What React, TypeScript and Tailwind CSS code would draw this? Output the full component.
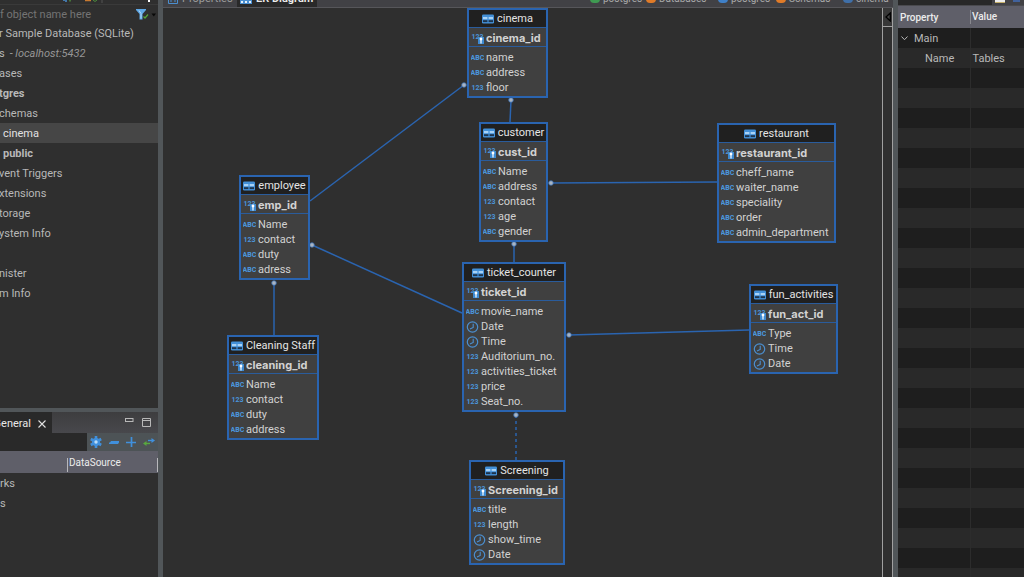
import React from "react";

type Kind = "abc" | "num" | "time";

interface Entity {
  name: string;
  place: string;
  pk: string;
  columns: [Kind, string][];
}

const entities: Entity[] = [
  { name: "cinema", place: "left-[304px] top-[0px] w-[81px]", pk: "cinema_id", columns: [["abc", "name"], ["abc", "address"], ["num", "floor"]] },
  { name: "customer", place: "left-[316px] top-[114px] w-[69px]", pk: "cust_id", columns: [["abc", "Name"], ["abc", "address"], ["num", "contact"], ["num", "age"], ["abc", "gender"]] },
  { name: "restaurant", place: "left-[554px] top-[115px] w-[119px]", pk: "restaurant_id", columns: [["abc", "cheff_name"], ["abc", "waiter_name"], ["abc", "speciality"], ["abc", "order"], ["abc", "admin_department"]] },
  { name: "employee", place: "left-[76px] top-[167px] w-[71px]", pk: "emp_id", columns: [["abc", "Name"], ["num", "contact"], ["abc", "duty"], ["abc", "adress"]] },
  { name: "ticket_counter", place: "left-[299px] top-[254px] w-[104px]", pk: "ticket_id", columns: [["abc", "movie_name"], ["time", "Date"], ["time", "Time"], ["num", "Auditorium_no."], ["num", "activities_ticket"], ["num", "price"], ["num", "Seat_no."]] },
  { name: "fun_activities", place: "left-[586px] top-[276px] w-[89px]", pk: "fun_act_id", columns: [["abc", "Type"], ["time", "Time"], ["time", "Date"]] },
  { name: "Cleaning Staff", place: "left-[64px] top-[327px] w-[92px]", pk: "cleaning_id", columns: [["abc", "Name"], ["num", "contact"], ["abc", "duty"], ["abc", "address"]] },
  { name: "Screening", place: "left-[306px] top-[452px] w-[96px]", pk: "Screening_id", columns: [["abc", "title"], ["num", "length"], ["time", "show_time"], ["time", "Date"]] },
];

const links: { from: [number, number]; to: [number, number]; dashed?: boolean }[] = [
  { from: [301, 77], to: [147, 193] },
  { from: [348, 92], to: [347, 114] },
  { from: [388, 175], to: [554, 174] },
  { from: [351, 236], to: [351, 254] },
  { from: [149, 237], to: [299, 305] },
  { from: [406, 327], to: [586, 322] },
  { from: [111, 275], to: [111, 327] },
  { from: [353, 407], to: [353, 452], dashed: true },
];

const tree: { label: string; className?: string; note?: string }[] = [
  { label: "r Sample Database (SQLite)" },
  { label: "s", note: "- localhost:5432" },
  { label: "ases" },
  { label: "tgres", className: "font-bold" },
  { label: "chemas" },
  { label: "cinema", className: "bg-[#464646] pl-1 text-[#e2e2e2]" },
  { label: "public", className: "pl-1 font-bold" },
  { label: "vent Triggers" },
  { label: "xtensions" },
  { label: "torage" },
  { label: "ystem Info" },
  { label: "" },
  { label: "nister" },
  { label: "m Info" },
];

function TableIcon() {
  return (
    <svg className="h-[10px] w-[12px] shrink-0" viewBox="0 0 12 10" aria-hidden="true">
      <rect y=".5" width="12" height="9" rx="1.3" fill="#4390d8" />
      <rect x="1" y="3" width="4.4" height="2.2" fill="#a9d2f5" />
      <rect x="6.6" y="3" width="4.4" height="2.2" fill="#a9d2f5" />
      <rect x="1" y="6.2" width="4.4" height="1.9" fill="#1d344c" />
      <rect x="6.6" y="6.2" width="4.4" height="1.9" fill="#1d344c" />
    </svg>
  );
}

function KindIcon({ kind }: { kind: Kind }) {
  if (kind === "time") {
    return (
      <svg className="h-[12px] w-[13px] shrink-0" viewBox="0 0 13 12" fill="none" stroke="#4b8fd0" aria-hidden="true">
        <circle cx="6.5" cy="6" r="5.2" strokeWidth="1.2" />
        <path d="M7.2 2.8V6.4L4 8" strokeWidth="1.1" />
      </svg>
    );
  }
  return (
    <svg className="h-[10px] w-[13px] shrink-0" viewBox="0 0 13 10" aria-hidden="true">
      {kind === "num" ? (
        <text x="6.5" y="7" textAnchor="middle" className="fill-[#4b94da] font-[Roboto,sans-serif] text-[7px] font-bold">123</text>
      ) : (
        <text x="6.5" y="7" textAnchor="middle" className="fill-[#4b94da] font-[Roboto,sans-serif] text-[7px] font-extrabold">ABC</text>
      )}
    </svg>
  );
}

function KeyIcon() {
  return (
    <svg className="h-[12px] w-[13px] shrink-0" viewBox="0 0 13 12" aria-hidden="true">
      <text x="6.5" y="7" textAnchor="middle" className="fill-[#4b94da] font-[Roboto,sans-serif] text-[7px] font-bold">123</text>
      <rect x="7" y="5" width="6" height="7" fill="#3d8ad2" />
      <path d="M10 8v3.5" stroke="#fff" strokeWidth="1.2" />
      <circle cx="10" cy="7" r="1.4" fill="#fff" />
    </svg>
  );
}

function EntityBox({ entity }: { entity: Entity }) {
  return (
    <section className={`absolute border-2 border-[#2a64b0] bg-[#404040] text-[#d2d2d2] ${entity.place}`}>
      <h2 className="flex h-[18px] items-center justify-center gap-[3px] border-b border-[#2a5c9c] bg-[#202020] whitespace-nowrap text-[#e4e4e4]">
        <TableIcon />
        {entity.name}
      </h2>
      <div className="flex h-[19px] items-center gap-[2px] border-b border-[#2a5c9c] pt-[2px] pl-[2px] font-[Inter,'Liberation_Sans',sans-serif] font-bold whitespace-nowrap">
        <KeyIcon />
        {entity.pk}
      </div>
      <ul className="pt-[3px] pb-px">
        {entity.columns.map(([kind, label]) => (
          <li key={label} className="flex h-[15px] items-center gap-[2px] pl-[2px] whitespace-nowrap">
            <KindIcon kind={kind} />
            {label}
          </li>
        ))}
      </ul>
    </section>
  );
}

function Navigator() {
  return (
    <aside className="flex w-[158px] shrink-0 flex-col overflow-hidden">
      <div className="flex h-[5px] shrink-0 justify-end border-b border-[#3a3a3a] pr-[7px]">
        <svg className="h-[3px] w-[88px]" viewBox="0 0 88 3" aria-hidden="true">
          <path d="M1 0v1M3 0v2" stroke="#4b8fd0" strokeWidth="1.5" />
          <path d="M7 0v1.5" stroke="#4d8f3c" strokeWidth="1.5" />
          <path d="M22 .5h6" stroke="#c87a30" strokeWidth="1.5" />
          <path d="M30 0l2 1.5L34 0" stroke="#4d8f3c" fill="none" />
          <path d="M39 0v3" stroke="#555" />
          <path d="M86 0v2" stroke="#fff" strokeWidth="2" />
        </svg>
      </div>
      <div className="flex h-[18px] shrink-0 items-center">
        <input aria-label="Filter objects" placeholder="f object name here" className="min-w-0 flex-1 bg-transparent outline-none placeholder:text-[#747474]" />
        <button aria-label="Filter settings" className="mr-[2px] flex items-center">
          <svg className="h-[12px] w-[20px]" viewBox="0 0 20 12" aria-hidden="true">
            <path d="M0 1h10v1L6.500 6v5.500h-3V6L0 2z" fill="#5fa8e6" />
            <path d="M3 2.500l2 3v5" stroke="#b3d8f5" fill="none" />
            <path d="M7.500 8.500l1.500 1.500 3-3.500" stroke="#55a53a" strokeWidth="1.2" fill="none" />
            <path d="M15.500 5.500h4.500l-2.200 3z" fill="#080808" />
          </svg>
        </button>
      </div>
      <ul className="-ml-px flex-1">
        {tree.map((row, i) => (
          <li key={i} className={`flex h-5 items-center gap-[5px] overflow-hidden whitespace-nowrap ${row.className ?? ""}`}>
            {row.label}
            {row.note && <em className="text-[#969696]">{row.note}</em>}
          </li>
        ))}
      </ul>
      <section className="flex h-[169px] shrink-0 flex-col border-t-4 border-[#515659]">
        <div className="flex h-[21px] shrink-0 justify-between bg-linear-to-b from-[#3d3d3f] to-[#48484c]">
          <div className="flex w-[52px] items-center justify-end gap-[7px] overflow-hidden bg-[#292929] pt-[2px] pr-[6px] text-[#e8e8e8]">
            <span>General</span>
            <button aria-label="Close">
              <svg className="size-2" viewBox="0 0 8 8" aria-hidden="true"><path d="M.5.5l7 7M7.500.5l-7 7" stroke="#e0e0e0" strokeWidth="1.1" /></svg>
            </button>
          </div>
          <div className="flex items-center gap-2 pr-[7px]">
            <button aria-label="Minimize">
              <svg className="h-[9px] w-[9px]" viewBox="0 0 9 9" aria-hidden="true"><rect x=".5" y=".5" width="7.500" height="3" fill="none" stroke="#b8b8b8" /></svg>
            </button>
            <button aria-label="Maximize">
              <svg className="h-[9px] w-[9px]" viewBox="0 0 9 9" aria-hidden="true"><path d="M.5.5h8v8h-8zM.5 2.500h8" fill="none" stroke="#b8b8b8" /></svg>
            </button>
          </div>
        </div>
        <div className="flex h-[18px] shrink-0 bg-[#4d5356]">
          <input aria-label="Filter projects" className="w-[87px] bg-[#292929] outline-none" />
          <div className="flex flex-1 items-center justify-between pr-[3px] pl-[3px]">
            <button aria-label="Configure">
              <svg className="size-3" viewBox="0 0 12 12" aria-hidden="true">
                <path d="M6 0v12M.8 3l10.400 6M.8 9L11.200 3" stroke="#4090dc" strokeWidth="2.600" />
                <circle cx="6" cy="6" r="4" fill="#4090dc" />
                <circle cx="6" cy="6" r="1.700" fill="#b9dcf7" />
              </svg>
            </button>
            <button aria-label="Remove">
              <svg className="h-3 w-[10px]" viewBox="0 0 10 12" aria-hidden="true"><path d="M0 6.500h1l1-1.500h8v1.500l-1 1.500H0z" fill="#4090dc" /></svg>
            </button>
            <button aria-label="Add">
              <svg className="h-3 w-[10px]" viewBox="0 0 10 12" aria-hidden="true"><path d="M0 6.500h10M5.500 1v10" stroke="#4090dc" strokeWidth="1.700" /></svg>
            </button>
            <button aria-label="Link with editor">
              <svg className="h-3 w-3" viewBox="0 0 12 12" aria-hidden="true">
                <path d="M5 4.500h5" stroke="#4090dc" strokeWidth="1.400" /><path d="M8.500 2l3.500 2.500L8.500 7z" fill="#4090dc" />
                <path d="M2 7.500h5" stroke="#58a840" strokeWidth="1.400" /><path d="M3.500 5L0 7.500 3.500 10z" fill="#58a840" />
              </svg>
            </button>
          </div>
        </div>
        <table className="w-full">
          <thead>
            <tr className="h-[22px] bg-[#5f5f69] text-[10px] text-[#ececec]">
              <th className="w-[67px]" />
              <th className="p-0 pt-[6px] text-left font-normal">
                <span className="flex h-[14px] items-start border-x border-[#b8b8bc] pl-px leading-[9px]">DataSource</span>
              </th>
            </tr>
          </thead>
          <tbody>
            <tr className="h-5"><td className="p-0" colSpan={2}>rks</td></tr>
            <tr className="h-5"><td className="p-0" colSpan={2}>s</td></tr>
          </tbody>
        </table>
      </section>
    </aside>
  );
}

const crumbs: { label: string; tone: string; width: string }[] = [
  { label: "postgres", tone: "bg-[#3f9a52]", width: "w-[56px]" },
  { label: "Databases", tone: "bg-[#e07b28]", width: "w-[72px]" },
  { label: "postgres", tone: "bg-[#3f80c8]", width: "w-[58px]" },
  { label: "Schemas", tone: "bg-[#e07b28]", width: "w-[67px]" },
  { label: "cinema", tone: "bg-[#3f6fa8]", width: "w-[50px]" },
];

function Editor() {
  return (
    <main className="flex min-w-0 flex-1 flex-col">
      <header className="flex h-[8px] shrink-0 items-end overflow-hidden border-b border-[#56565a] bg-[#414145]">
        <nav className="flex h-[16px] shrink-0 text-[11px] leading-[16px] text-[#9c9c9c]">
          <a href="#properties" className="flex w-[74px] items-center gap-1 pb-px pl-[5px]">
            <svg className="size-[10px]" viewBox="0 0 10 10" aria-hidden="true"><path d="M.5 0v9.500h9V0M2 7h2M6 7h2" stroke="#4b8fd0" fill="none" /></svg>
            Properties
          </a>
          <a href="#diagram" className="flex w-[80px] items-center gap-1 bg-[#292929] pb-px pl-[3px] font-semibold whitespace-nowrap text-[#ededed]">
            <svg className="h-[10px] w-[12px] shrink-0" viewBox="0 0 12 10" aria-hidden="true"><path d="M0 5h12v5H0z" fill="#4b8fd0" /><path d="M1 8h2M5 8h2M9 8h2" stroke="#e6f1fb" strokeWidth="2" /></svg>
            ER Diagram
          </a>
        </nav>
        <nav aria-label="Breadcrumb" className="ml-auto flex h-[16px] shrink-0 text-[10px] leading-[16px] text-[#a8a8a8]">
          {crumbs.map((c, i) => (
            <a key={i} href="#crumb" className={`flex items-center gap-[3px] pb-px ${c.width}`}>
              <span className={`h-[9px] w-[10px] shrink-0 rounded-sm ${c.tone}`} />
              {c.label}
            </a>
          ))}
        </nav>
      </header>
      <div className="flex flex-1">
        <div className="relative flex-1 overflow-hidden">
          <svg className="absolute inset-0 size-full" aria-hidden="true">
            {links.map(({ from, to, dashed }, i) => (
              <g key={i}>
                <line x1={from[0]} y1={from[1]} x2={to[0]} y2={to[1]} stroke="#2a64b0" strokeWidth="1.5" strokeDasharray={dashed ? "3 3" : undefined} />
                <circle cx={from[0]} cy={from[1]} r="2.3" fill="#a9b4c2" stroke="#3b70b2" strokeWidth=".8" />
              </g>
            ))}
          </svg>
          {entities.map((e) => <EntityBox key={e.name} entity={e} />)}
        </div>
        <div className="w-[11px] border-x border-[#a0a0a0]">
          <button aria-label="Show palette" className="flex h-[19px] w-full items-center justify-center border-b border-[#a0a0a0] bg-[#383838]">
            <svg className="h-[10px] w-[6px]" viewBox="0 0 6 10" aria-hidden="true"><path d="M5.300 1v8L1 5z" fill="#444" stroke="#000" strokeWidth="1.300" /></svg>
          </button>
        </div>
      </div>
    </main>
  );
}

const emptyRows = Array.from({ length: 26 }, (_, i) => i);

function Properties() {
  return (
    <aside className="h-screen w-[126px] shrink-0 overflow-hidden bg-[#1e1e1e]">
      <div className="flex h-[6px] justify-end border-b border-[#4a4a4e] bg-[#282828]">
        <div className="flex w-[32px] justify-between bg-[#414145] pr-1 pl-[3px]">
          <span className="h-[3px] w-[10px] border-b border-[#c6b06a] bg-[#eeeeee]" />
          <span className="h-[2px] w-[7px] bg-[#41629c]" />
        </div>
      </div>
      <table className="w-full table-fixed">
        <thead>
          <tr className="h-[22px] bg-[#5f5f69] text-[10px] text-[#ececec]">
            <th className="w-[72px] p-0 pl-[2px] text-left font-medium">Property</th>
            <th className="p-0 text-left font-medium">
              <span className="block border-l border-[#88888e] pl-[1px] leading-[14px]">Value</span>
            </th>
          </tr>
        </thead>
        <tbody>
          <tr className="h-5 bg-[#1e1e1e]">
            <td className="border-r border-[#2c2c2c] p-0 pl-[3px]">
              <button className="flex items-center gap-[6px]">
                <svg className="h-[5px] w-[7px]" viewBox="0 0 7 5" aria-hidden="true"><path d="M.5.5l3 3.200 3-3.200" stroke="#b8b8b8" fill="none" /></svg>
                Main
              </button>
            </td>
            <td />
          </tr>
          <tr className="h-5 bg-[#292929]">
            <td className="border-r border-[#2c2c2c] p-0 pl-[27px]">Name</td>
            <td className="p-0 pl-[2px]">Tables</td>
          </tr>
          {emptyRows.map((i) => (
            <tr key={i} className="h-5 bg-[#292929] odd:bg-[#1e1e1e]">
              <td className="border-r border-[#2c2c2c]" />
              <td />
            </tr>
          ))}
        </tbody>
      </table>
    </aside>
  );
}

export default function App() {
  return (
    <div className="flex h-screen overflow-hidden bg-[#2f2f2f] font-[Roboto,'Liberation_Sans',sans-serif] text-[11px] leading-[15px] text-[#b8b8b8]">
      <Navigator />
      <div className="w-[5px] shrink-0 bg-[#515659]" />
      <Editor />
      <div className="w-[5px] shrink-0 bg-[#515659]" />
      <Properties />
    </div>
  );
}
